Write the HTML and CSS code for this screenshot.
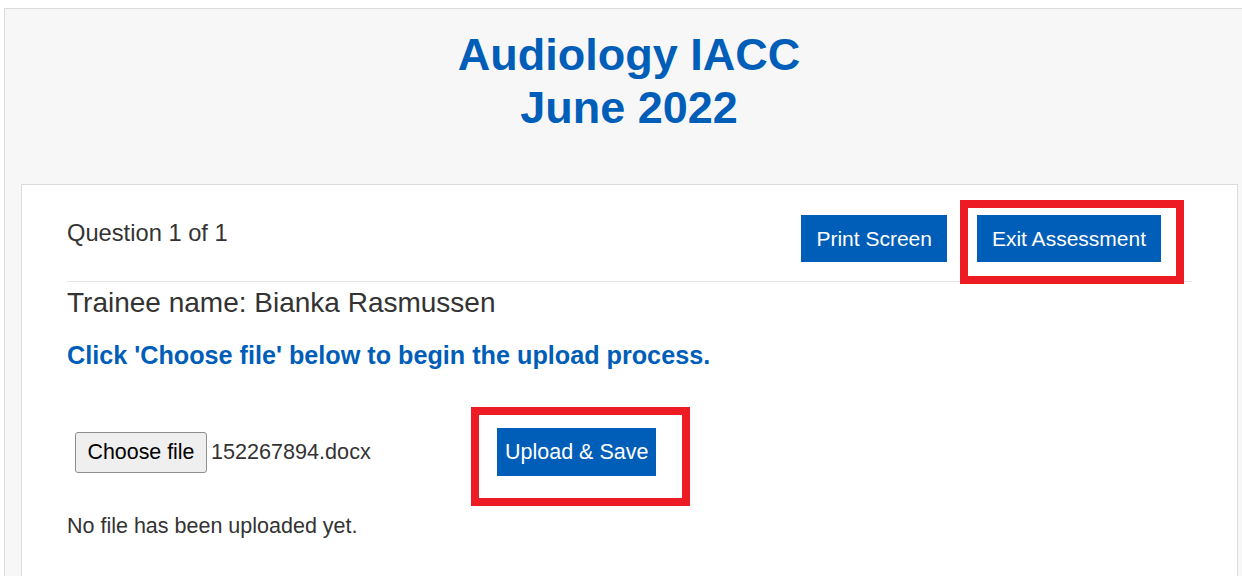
FILE: index.html
```html
<!DOCTYPE html>
<html lang="en">
<head>
<meta charset="utf-8">
<title>Audiology IACC - June 2022</title>
<link rel="stylesheet" href="styles.css">
</head>
<body>
<div class="page">
  <div class="outer">
    <h1 class="title">Audiology IACC<br>June 2022</h1>
    <div class="card">
      <div class="header-row">
        <div class="question">Question 1 of 1</div>
        <div class="actions">
          <button class="btn">Print Screen</button>
          <span class="mark">
            <button class="btn">Exit Assessment</button>
            <span class="annot annot-exit"></span>
          </span>
        </div>
      </div>
      <div class="trainee">Trainee name: Bianka Rasmussen</div>
      <p class="instruction">Click 'Choose file' below to begin the upload process.</p>
      <div class="upload-row">
        <div class="file-input">
          <span class="file-btn">Choose file</span>
          <span class="file-name">152267894.docx</span>
        </div>
        <span class="mark">
          <button class="btn btn-upload">Upload &amp; Save</button>
          <span class="annot annot-upload"></span>
        </span>
      </div>
      <p class="status">No file has been uploaded yet.</p>
    </div>
  </div>
</div>
</body>
</html>
```
FILE: styles.css
```css
html, body {
  margin: 0;
  padding: 0;
  background: #ffffff;
  overflow: hidden;
}

body {
  font-family: "Liberation Sans", Arial, sans-serif;
  color: #333333;
}

.page {
  width: 1242px;
  height: 576px;
  overflow: hidden;
}

.outer {
  margin: 8px 0 0 4px;
  width: 1260px;
  height: 600px;
  background: #f7f7f7;
  border-top: 1px solid #dcdcdc;
  border-left: 1px solid #dcdcdc;
  box-sizing: border-box;
  padding-top: 19px;
}

.title {
  width: 1250px;
  margin: 0 0 0 -1px;
  padding: 0;
  text-align: center;
  font-size: 45px;
  line-height: 53px;
  font-weight: bold;
  color: #005eb8;
}

.card {
  margin: 50px 0 0 16px;
  width: 1217px;
  height: 420px;
  box-sizing: border-box;
  background: #ffffff;
  border: 1px solid #dcdcdc;
  padding: 30px 45px 0 45px;
}

.header-row {
  display: flex;
  justify-content: space-between;
  align-items: flex-start;
  padding-bottom: 19px;
  border-bottom: 1px solid #e6e6e6;
}

.question {
  font-size: 23.7px;
  line-height: 29px;
  padding-top: 4px;
}

.actions {
  display: flex;
  gap: 30px;
  margin-right: 31px;
}

.btn {
  font-family: "Liberation Sans", Arial, sans-serif;
  font-size: 21px;
  height: 47px;
  padding: 0 15px;
  border: none;
  border-radius: 0;
  background: #005eb8;
  color: #ffffff;
  cursor: pointer;
}

.btn-upload {
  font-size: 21.5px;
  height: 48px;
  padding: 0 8px;
}

.mark {
  position: relative;
  display: inline-flex;
}

.annot {
  position: absolute;
  border: 8px solid #ed1c24;
  pointer-events: none;
}

.annot-exit {
  left: -17px;
  top: -15px;
  width: 208px;
  height: 68px;
}

.annot-upload {
  left: -26px;
  top: -21px;
  width: 203px;
  height: 83px;
}

.trainee {
  font-size: 28px;
  line-height: 34px;
  margin-top: 4px;
}

.instruction {
  margin: 20px 0 0 0;
  font-size: 25.2px;
  line-height: 30px;
  font-weight: bold;
  color: #005eb8;
}

.upload-row {
  display: flex;
  align-items: center;
  margin-top: 58px;
}

.file-input {
  display: flex;
  align-items: center;
  width: 422px;
  padding-left: 8px;
}

.file-btn {
  display: inline-block;
  font-size: 21.4px;
  line-height: 39px;
  padding: 0 11.5px;
  background: #efefef;
  border: 1px solid #8f8f8f;
  border-radius: 3px;
  color: #000000;
}

.file-name {
  margin-left: 4px;
  font-size: 21.6px;
  color: #333333;
}

.status {
  margin: 37px 0 0 0;
  font-size: 21.5px;
  line-height: 26px;
}
```
